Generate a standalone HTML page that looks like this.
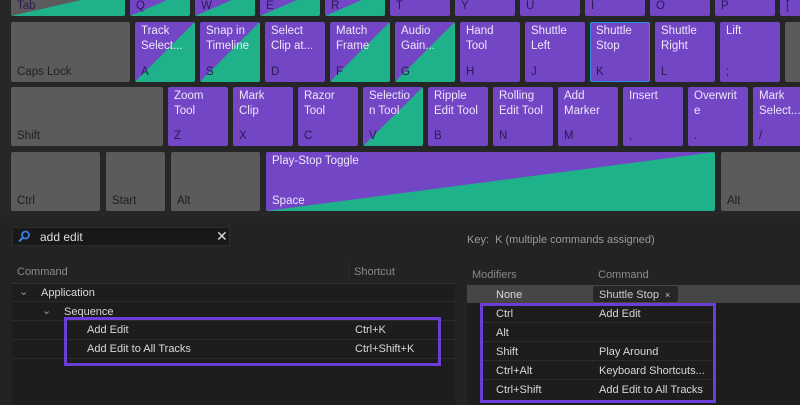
<!DOCTYPE html>
<html><head><meta charset="utf-8"><style>
*{margin:0;padding:0;box-sizing:border-box}
body{width:800px;height:405px;overflow:hidden;background:#232323;font-family:"Liberation Sans",sans-serif;position:relative;color:#d8d8d8}
.k{position:absolute;border-radius:2px;background:#7246c4;color:#eee6fa;font-size:11.5px;line-height:15px;padding:2px 6px;overflow:hidden}
.k .l{position:absolute;left:6px;bottom:2px;color:#2a1a55;font-size:11.5px}
.g{background:#5b5b5b;color:#ddd}
.g .l{color:#1e1e1e}
.s{background:linear-gradient(to bottom right,#7246c4 50%,#1fb28a 50%)}
.sg{background:linear-gradient(to bottom right,#5b5b5b 50%,#1fb28a 50%)}
.t{position:absolute;font-size:11px;white-space:nowrap}
.box{position:absolute;border:3px solid #6b3fd6}
</style></head><body>
<div style="position:absolute;left:0;top:0;width:800px;height:217px;background:#262626"></div>
<div class="k sg" style="left:11px;top:-10px;width:114px;height:26px"><span class="l">Tab</span></div>
<div class="k s" style="left:130px;top:-10px;width:60px;height:26px"><span class="l">Q</span></div>
<div class="k s" style="left:195px;top:-10px;width:60px;height:26px"><span class="l">W</span></div>
<div class="k s" style="left:260px;top:-10px;width:60px;height:26px"><span class="l">E</span></div>
<div class="k s" style="left:325px;top:-10px;width:60px;height:26px"><span class="l">R</span></div>
<div class="k" style="left:390px;top:-10px;width:60px;height:26px"><span class="l">T</span></div>
<div class="k" style="left:455px;top:-10px;width:60px;height:26px"><span class="l">Y</span></div>
<div class="k" style="left:520px;top:-10px;width:60px;height:26px"><span class="l">U</span></div>
<div class="k" style="left:585px;top:-10px;width:60px;height:26px"><span class="l">I</span></div>
<div class="k" style="left:650px;top:-10px;width:60px;height:26px"><span class="l">O</span></div>
<div class="k" style="left:715px;top:-10px;width:60px;height:26px"><span class="l">P</span></div>
<div class="k" style="left:780px;top:-10px;width:60px;height:26px"><span class="l">[</span></div>
<div class="k g" style="left:11px;top:22px;width:119px;height:60px"><span class="l" style="color:#222">Caps Lock</span></div>
<div class="k s" style="left:135px;top:22px;width:60px;height:60px">Track<br>Select...<span class="l">A</span></div>
<div class="k s" style="left:200px;top:22px;width:60px;height:60px">Snap in<br>Timeline<span class="l">S</span></div>
<div class="k" style="left:265px;top:22px;width:60px;height:60px">Select<br>Clip at...<span class="l">D</span></div>
<div class="k s" style="left:330px;top:22px;width:60px;height:60px">Match<br>Frame<span class="l">F</span></div>
<div class="k s" style="left:395px;top:22px;width:60px;height:60px">Audio<br>Gain...<span class="l">G</span></div>
<div class="k" style="left:460px;top:22px;width:60px;height:60px">Hand<br>Tool<span class="l">H</span></div>
<div class="k" style="left:525px;top:22px;width:60px;height:60px">Shuttle<br>Left<span class="l">J</span></div>
<div class="k" style="left:590px;top:22px;width:60px;height:60px;border:1px solid #2a8ee8;padding:1px 5px">Shuttle<br>Stop<span class="l" style="left:5px;bottom:1px">K</span></div>
<div class="k" style="left:655px;top:22px;width:60px;height:60px">Shuttle<br>Right<span class="l">L</span></div>
<div class="k" style="left:720px;top:22px;width:60px;height:60px">Lift<span class="l">;</span></div>
<div class="k g" style="left:785px;top:22px;width:60px;height:60px"></div>
<div class="k g" style="left:11px;top:87px;width:152px;height:59px"><span class="l">Shift</span></div>
<div class="k" style="left:168px;top:87px;width:60px;height:59px">Zoom<br>Tool<span class="l">Z</span></div>
<div class="k" style="left:233px;top:87px;width:60px;height:59px">Mark<br>Clip<span class="l">X</span></div>
<div class="k" style="left:298px;top:87px;width:60px;height:59px">Razor<br>Tool<span class="l">C</span></div>
<div class="k s" style="left:363px;top:87px;width:60px;height:59px">Selectio<br>n Tool<span class="l">V</span></div>
<div class="k" style="left:428px;top:87px;width:60px;height:59px">Ripple<br>Edit Tool<span class="l">B</span></div>
<div class="k" style="left:493px;top:87px;width:60px;height:59px">Rolling<br>Edit Tool<span class="l">N</span></div>
<div class="k" style="left:558px;top:87px;width:60px;height:59px">Add<br>Marker<span class="l">M</span></div>
<div class="k" style="left:623px;top:87px;width:60px;height:59px">Insert<span class="l">,</span></div>
<div class="k" style="left:688px;top:87px;width:60px;height:59px">Overwrit<br>e<span class="l">.</span></div>
<div class="k" style="left:753px;top:87px;width:60px;height:59px">Mark<br>Select...<span class="l">/</span></div>
<div class="k g" style="left:11px;top:152px;width:89px;height:59px"><span class="l">Ctrl</span></div>
<div class="k g" style="left:106px;top:152px;width:59px;height:59px"><span class="l">Start</span></div>
<div class="k g" style="left:171px;top:152px;width:89px;height:59px"><span class="l">Alt</span></div>
<div class="k s" style="left:266px;top:152px;width:449px;height:59px">Play-Stop Toggle<span class="l" style="color:#eee6fa">Space</span></div>
<div class="k g" style="left:721px;top:152px;width:90px;height:59px"><span class="l">Alt</span></div>
<div style="position:absolute;left:12px;top:227px;width:218px;height:19px;background:#181818;border:1px solid #2c2c2c"></div>
<svg style="position:absolute;left:17px;top:230px" width="14" height="13"><circle cx="8.5" cy="5" r="3.5" fill="none" stroke="#3a7fe0" stroke-width="1.8"/><line x1="6" y1="7.5" x2="2" y2="11.5" stroke="#3a7fe0" stroke-width="2"/></svg>
<div class="t" style="left:40px;top:230px;color:#ddd;font-size:12px">add edit</div>
<div class="t" style="left:216px;top:228px;color:#ddd;font-size:14px">✕</div>
<div class="t" style="left:17px;top:266px;color:#8a8a8a">Command</div>
<div style="position:absolute;left:348px;top:262px;width:1px;height:20px;background:#2e2e2e"></div>
<div class="t" style="left:354px;top:266px;color:#8a8a8a">Shortcut</div>
<div style="position:absolute;left:12px;top:283px;width:443px;height:122px;background:#1d1d1d;border-top:1px solid #333"></div>
<div style="position:absolute;left:12px;top:301px;width:443px;height:1px;background:#2c2c2c"></div>
<div style="position:absolute;left:12px;top:320px;width:443px;height:1px;background:#2c2c2c"></div>
<div style="position:absolute;left:12px;top:339px;width:443px;height:1px;background:#2c2c2c"></div>
<div style="position:absolute;left:12px;top:358px;width:443px;height:1px;background:#2c2c2c"></div>
<div class="t" style="left:19px;top:285px;color:#999">⌄</div>
<div class="t" style="left:41px;top:287px">Application</div>
<div class="t" style="left:42px;top:304px;color:#999">⌄</div>
<div class="t" style="left:64px;top:306px">Sequence</div>
<div class="t" style="left:87px;top:324px">Add Edit</div>
<div class="t" style="left:355px;top:324px">Ctrl+K</div>
<div class="t" style="left:87px;top:343px">Add Edit to All Tracks</div>
<div class="t" style="left:355px;top:343px">Ctrl+Shift+K</div>
<div class="box" style="left:64px;top:317px;width:377px;height:49px"></div>
<div class="t" style="left:467px;top:234px;color:#9a9a9a">Key:&nbsp; K (multiple commands assigned)</div>
<div class="t" style="left:472px;top:269px;color:#8a8a8a">Modifiers</div>
<div class="t" style="left:598px;top:269px;color:#8a8a8a">Command</div>
<div style="position:absolute;left:467px;top:285px;width:333px;height:18px;background:#464646"></div>
<div class="t" style="left:496px;top:289px">None</div>
<div style="position:absolute;left:593px;top:286px;width:85px;height:16px;background:#262626;border-radius:2px"></div>
<div class="t" style="left:599px;top:289px;color:#ccc">Shuttle Stop &nbsp;<span style="font-size:9px">×</span></div>
<div style="position:absolute;left:467px;top:303px;width:333px;height:102px;background:#1d1d1d"></div>
<div class="t" style="left:496px;top:308px">Ctrl</div><div class="t" style="left:599px;top:308px">Add Edit</div>
<div class="t" style="left:496px;top:327px">Alt</div>
<div class="t" style="left:496px;top:346px">Shift</div><div class="t" style="left:599px;top:346px">Play Around</div>
<div class="t" style="left:496px;top:365px">Ctrl+Alt</div><div class="t" style="left:599px;top:365px">Keyboard Shortcuts...</div>
<div class="t" style="left:496px;top:384px">Ctrl+Shift</div><div class="t" style="left:599px;top:384px">Add Edit to All Tracks</div>
<div style="position:absolute;left:483px;top:322px;width:230px;height:1px;background:#2c2c2c"></div>
<div style="position:absolute;left:483px;top:341px;width:230px;height:1px;background:#2c2c2c"></div>
<div style="position:absolute;left:483px;top:360px;width:230px;height:1px;background:#2c2c2c"></div>
<div style="position:absolute;left:483px;top:379px;width:230px;height:1px;background:#2c2c2c"></div>
<div class="box" style="left:480px;top:303px;width:236px;height:100px"></div>
</body></html>
